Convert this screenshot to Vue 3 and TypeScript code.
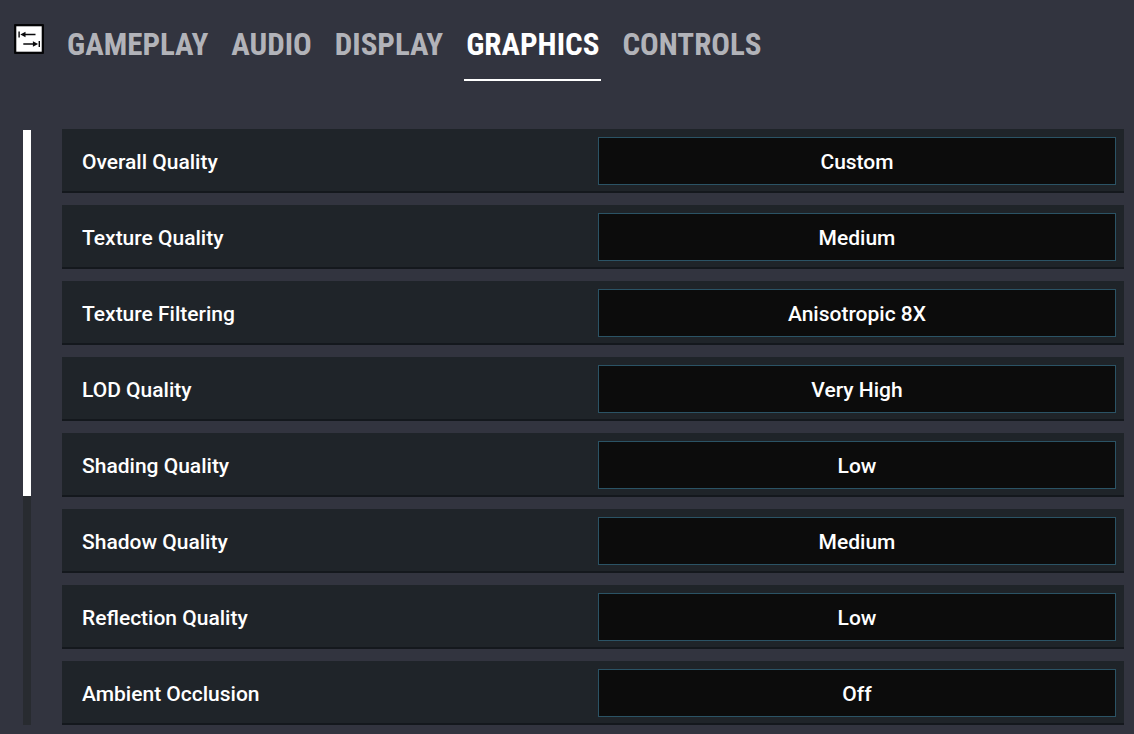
<script setup lang="ts">
import { ref } from 'vue'

interface Setting {
  id: string
  label: string
  value: string
  options: string[]
}

const tabs: string[] = ['GAMEPLAY', 'AUDIO', 'DISPLAY', 'GRAPHICS', 'CONTROLS']
const activeTab = ref('GRAPHICS')

const levels = ['Low', 'Medium', 'High', 'Very High']

const settings = ref<Setting[]>([
  { id: 'overall', label: 'Overall Quality', value: 'Custom', options: [...levels, 'Custom'] },
  { id: 'texture', label: 'Texture Quality', value: 'Medium', options: levels },
  { id: 'filtering', label: 'Texture Filtering', value: 'Anisotropic 8X', options: ['Linear', 'Anisotropic 4X', 'Anisotropic 8X'] },
  { id: 'lod', label: 'LOD Quality', value: 'Very High', options: levels },
  { id: 'shading', label: 'Shading Quality', value: 'Low', options: levels },
  { id: 'shadow', label: 'Shadow Quality', value: 'Medium', options: levels },
  { id: 'reflection', label: 'Reflection Quality', value: 'Low', options: levels },
  { id: 'occlusion', label: 'Ambient Occlusion', value: 'Off', options: ['Off', 'On'] },
])
</script>

<template>
  <div class="screen">
    <header class="header">
      <svg class="tab-key" viewBox="0 0 30 30" aria-hidden="true">
        <rect width="30" height="30" rx="1" fill="#050507" />
        <rect x="2.3" y="2.3" width="25.4" height="25.4" fill="#fff" />
        <g fill="#0a0a0c">
          <rect x="4.4" y="7.5" width="1.4" height="6" />
          <path d="M6.3 10.5 11.5 7.8V9.8H21.5V11.2H11.5V13.2Z" />
          <rect x="24.6" y="17" width="1.4" height="6" />
          <path d="M24.1 20 18.9 17.3V19.3H9.3V20.7H18.9V22.7Z" />
        </g>
      </svg>
      <nav class="tabs" aria-label="Options">
        <button
          v-for="tab in tabs"
          :key="tab"
          type="button"
          class="tab"
          :class="{ active: tab === activeTab }"
          @click="activeTab = tab"
        >{{ tab }}</button>
      </nav>
    </header>

    <main class="content">
      <div class="track"><div class="thumb"></div></div>
      <div class="rows">
        <div v-for="item in settings" :key="item.id" class="row">
          <label class="label" :for="item.id">{{ item.label }}</label>
          <select :id="item.id" v-model="item.value" class="value">
            <option v-for="option in item.options" :key="option" :value="option">{{ option }}</option>
          </select>
        </div>
      </div>
    </main>
  </div>
</template>

<style>
body {
  background: #32343f;
}
</style>

<style scoped>
.screen {
  box-sizing: border-box;
  min-height: 100vh;
  padding: 8px 10px 9px 14px;
  color: #fff;
  font-family: Roboto, "Liberation Sans", sans-serif;
}

.header {
  display: flex;
  align-items: flex-start;
}

.tab-key {
  flex: none;
  width: 30px;
  height: 30px;
  margin-top: 16px;
}

.tabs {
  display: flex;
  gap: 19px;
  margin-left: 21px;
}

.tab {
  height: 73px;
  padding: 0 2px;
  border: 0;
  border-bottom: 2px solid transparent;
  background: none;
  color: #b2b3b9;
  font: 700 31px/73px "Roboto Condensed", "Liberation Sans Narrow", Roboto, sans-serif;
  cursor: pointer;
}

.tab.active {
  border-bottom-color: #fff;
  color: #fff;
}

.content {
  display: flex;
  gap: 31px;
  margin-top: 48px;
  padding-left: 9px;
}

.track {
  flex: none;
  width: 8px;
  margin-top: 1px;
  background: #282b30;
}

.thumb {
  height: 61.5%;
  background: #fff;
}

.rows {
  display: flex;
  flex: 1;
  flex-direction: column;
  gap: 12px;
}

.row {
  display: grid;
  grid-template-columns: 1fr 1fr;
  align-items: center;
  padding: 8px 8px 6px 18px;
  border-bottom: 2px solid #14181d;
  background: #1f2429;
}

.label,
.value {
  font-size: 21px;
  font-weight: 500;
}

.label {
  padding: 2px 0 0 2px;
}

.value {
  height: 48px;
  padding: 2px 0 0;
  border: 1px solid #2b5365;
  border-radius: 0;
  appearance: none;
  background: #0c0c0c;
  color: #fff;
  font-family: inherit;
  text-align: center;
  text-align-last: center;
}
</style>
